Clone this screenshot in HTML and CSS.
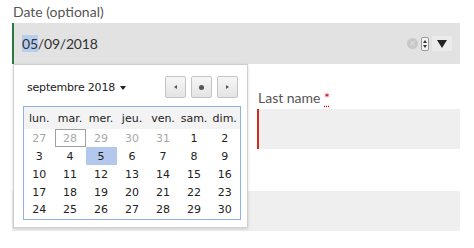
FILE: index.html
```html
<!DOCTYPE html>
<html>
<head>
  <meta charset="UTF-8">
  <title>Date field</title>
  <link rel="stylesheet" href="styles.css">
</head>
<body>

  <div class="form">

    <!-- Date field -->
    <div class="field date-field">
      <label class="label">Date (optional)</label>
      <div class="date-input">
        <span class="date-text"><span class="sel">05</span>/09/2018</span>
        <span class="controls">
          <span class="clear">&times;</span>
          <span class="spin"><i class="up"></i><i class="down"></i></span>
          <span class="drop"></span>
        </span>
      </div>

      <!-- Calendar popup -->
      <div class="picker">
        <div class="picker-head">
          <span class="month">septembre 2018 <span class="caret"></span></span>
          <div class="nav">
            <button class="nav-btn"><span class="tri-left"></span></button>
            <button class="nav-btn"><span class="dot"></span></button>
            <button class="nav-btn"><span class="tri-right"></span></button>
          </div>
        </div>
        <table class="cal">
          <thead>
            <tr>
              <th>lun.</th><th>mar.</th><th>mer.</th><th>jeu.</th><th>ven.</th><th>sam.</th><th>dim.</th>
            </tr>
          </thead>
          <tbody>
            <tr>
              <td class="other">27</td><td class="other today">28</td><td class="other">29</td><td class="other">30</td><td class="other">31</td><td>1</td><td>2</td>
            </tr>
            <tr>
              <td>3</td><td>4</td><td class="picked">5</td><td>6</td><td>7</td><td>8</td><td>9</td>
            </tr>
            <tr>
              <td>10</td><td>11</td><td>12</td><td>13</td><td>14</td><td>15</td><td>16</td>
            </tr>
            <tr>
              <td>17</td><td>18</td><td>19</td><td>20</td><td>21</td><td>22</td><td>23</td>
            </tr>
            <tr>
              <td>24</td><td>25</td><td>26</td><td>27</td><td>28</td><td>29</td><td>30</td>
            </tr>
          </tbody>
        </table>
      </div>
    </div>

    <!-- Name row (left column sits under the popup) -->
    <div class="row">
      <div class="field"></div>
      <div class="field">
        <label class="label">Last name <abbr class="req">*</abbr></label>
        <div class="text-input required"></div>
      </div>
    </div>

    <div class="field next-field">
      <div class="text-input"></div>
    </div>

  </div>

</body>
</html>
```

FILE: styles.css
```css
body {
  margin: 0;
  padding: 0 14px 0 12px;
  background: #fff;
  font-family: Lato, "Open Sans", sans-serif;
  color: #555;
}
.form {
  display: flex;
  flex-direction: column;
}
.field {
  position: relative;
  display: flex;
  flex-direction: column;
}
.label {
  font-size: 14px;
  line-height: 23px;
  color: #555;
  padding-left: 1px;
}
.req {
  color: #d0021b;
  text-decoration: underline dotted;
  text-underline-offset: 3px;
}

/* date input */
.date-input {
  display: flex;
  align-items: center;
  justify-content: space-between;
  height: 41px;
  background: #e2e2e2;
  border-left: 2px solid #2c7a3f;
  padding: 0 8px 0 8px;
}
.date-text {
  font-size: 14px;
  letter-spacing: -0.2px;
  color: #333;
}
.sel { background: #b5cdef; }
.controls {
  display: flex;
  align-items: center;
  gap: 3px;
}
.clear {
  width: 11px;
  height: 11px;
  border-radius: 50%;
  background: #c8c8c8;
  color: #e2e2e2;
  font-size: 10px;
  line-height: 11px;
  text-align: center;
  font-family: Arial, sans-serif;
}
.spin {
  display: flex;
  flex-direction: column;
  align-items: center;
  justify-content: center;
  gap: 2px;
  width: 6px;
  height: 12px;
  border: 1px solid #999;
  border-radius: 2px;
  background: #f4f4f4;
}
.spin i {
  width: 0;
  height: 0;
  border-left: 2px solid transparent;
  border-right: 2px solid transparent;
}
.spin .up { border-bottom: 3px solid #333; }
.spin .down { border-top: 3px solid #333; }
.drop {
  position: relative;
  width: 20px;
  height: 15px;
  background: #ebebeb;
}
.drop::after {
  content: "";
  position: absolute;
  left: 5px;
  top: 4px;
  border-left: 5px solid transparent;
  border-right: 5px solid transparent;
  border-top: 8px solid #222;
}

/* calendar popup */
.picker {
  position: absolute;
  top: 64px;
  left: 1px;
  z-index: 2;
  width: 235px;
  height: 164px;
  box-sizing: border-box;
  background: #fff;
  border: 1px solid #cfcfcf;
  box-shadow: 0 1px 3px rgba(0, 0, 0, 0.15);
  padding: 10px 9px 0 9px;
  font-family: "DejaVu Sans", sans-serif;
  font-size: 11px;
  color: #222;
}
.picker-head {
  display: flex;
  justify-content: space-between;
  align-items: center;
  height: 24px;
  margin-bottom: 7px;
}
.month {
  padding-left: 4px;
  letter-spacing: -0.2px;
}
.caret {
  display: inline-block;
  margin-left: 2px;
  vertical-align: middle;
  border-left: 3px solid transparent;
  border-right: 3px solid transparent;
  border-top: 4px solid #222;
}
.nav {
  display: flex;
  gap: 5px;
}
.nav-btn {
  display: flex;
  align-items: center;
  justify-content: center;
  width: 21px;
  height: 22px;
  padding: 0;
  border: 1px solid #c4c4c4;
  border-radius: 2px;
  background: linear-gradient(#f6f6f6, #e4e4e4);
}
.tri-left {
  border-top: 2px solid transparent;
  border-bottom: 2px solid transparent;
  border-right: 3px solid #555;
}
.tri-right {
  border-top: 2px solid transparent;
  border-bottom: 2px solid transparent;
  border-left: 3px solid #555;
}
.dot {
  width: 5px;
  height: 5px;
  border-radius: 50%;
  background: #555;
}
.cal {
  border-collapse: collapse;
  width: 218px;
  border: 1px solid #8fb0e8;
  table-layout: fixed;
}
.cal th {
  height: 22px;
  font-weight: normal;
  background: #f3f3f3;
  text-align: center;
  padding: 0;
}
.cal td {
  height: 18px;
  padding: 0;
  text-align: center;
  box-sizing: border-box;
}
.cal .other { color: #a8a8a8; }
.cal .today { outline: 1px solid #a0a0a0; outline-offset: -1px; }
.cal .picked { background: #b3c8ec; }

/* other fields */
.row {
  display: grid;
  grid-template-columns: 233px 1fr;
  gap: 12px;
  margin-top: 22px;
}
.text-input {
  height: 40px;
  background: #efefef;
}
.text-input.required {
  border-left: 2px solid #d0301b;
}
.next-field {
  margin-top: 42px;
}
```
